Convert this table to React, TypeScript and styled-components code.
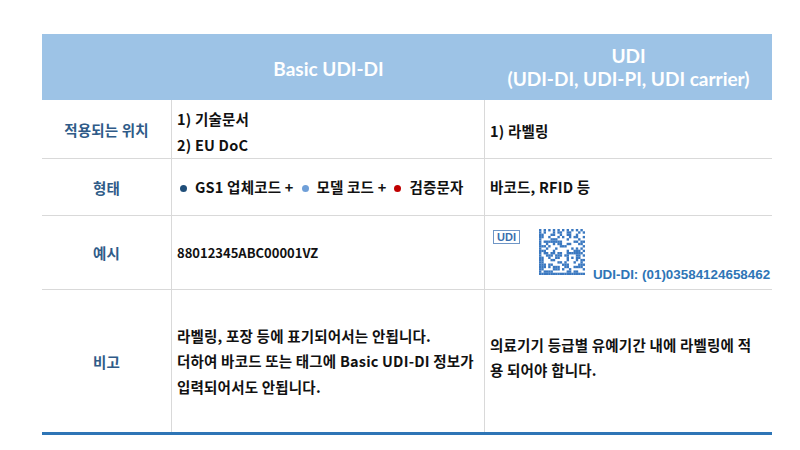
import React from "react";
import styled, { createGlobalStyle } from "styled-components";

const GlobalStyle = createGlobalStyle`
  html, body {
    margin: 0;
    padding: 0;
    background: #ffffff;
  }
  body {
    font-family: "Noto Sans CJK KR", "Noto Sans", sans-serif;
  }
`;

const Page = styled.div`
  width: 800px;
  height: 450px;
  padding: 34px 28px 0 42px;
  box-sizing: border-box;
`;

const Table = styled.div`
  display: grid;
  grid-template-columns: 130px 313px 287px;
  grid-template-rows: 66px 59px 57px 74px 142px;
  width: 730px;
  border-bottom: 3px solid #2e75b6;
`;

const HeadCell = styled.div<{ $drop?: number }>`
  background: #9dc3e6;
  color: #ffffff;
  font-family: Lato, "Noto Sans", sans-serif;
  font-size: 19px;
  font-weight: 700;
  display: flex;
  flex-direction: column;
  align-items: center;
  justify-content: center;
  text-align: center;
  padding-top: ${(p) => p.$drop ?? 0}px;
`;

const HeadLine = styled.div`
  height: 23px;
  line-height: 23px;
  white-space: nowrap;
`;

const LabelCell = styled.div<{ $last?: boolean }>`
  display: flex;
  align-items: center;
  justify-content: center;
  color: #2f5b88;
  font-size: 14.5px;
  font-weight: 700;
  letter-spacing: 0.2px;
  border-right: 1px solid #d9d9d9;
  border-bottom: ${(p) => (p.$last ? "none" : "1px solid #d9d9d9")};
`;

const Cell = styled.div<{ $last?: boolean; $right?: boolean; $lift?: number; $drop?: number }>`
  display: flex;
  flex-direction: column;
  justify-content: center;
  padding-left: 5px;
  padding-top: ${(p) => p.$drop ?? 0}px;
  padding-bottom: ${(p) => p.$lift ?? 0}px;
  color: #111111;
  font-size: 14.5px;
  font-weight: 700;
  line-height: 25.5px;
  letter-spacing: 0.2px;
  border-right: ${(p) => (p.$right ? "none" : "1px solid #d9d9d9")};
  border-bottom: ${(p) => (p.$last ? "none" : "1px solid #d9d9d9")};
`;

const Line = styled.div<{ $lh?: number }>`
  white-space: nowrap;
  line-height: ${(p) => (p.$lh ? `${p.$lh}px` : "inherit")};
`;

const Code = styled.div`
  white-space: nowrap;
  font-size: 13px;
  letter-spacing: 0;
`;

const Dot = styled.span<{ $color: string; $gap?: number }>`
  display: inline-block;
  width: 7px;
  height: 7px;
  border-radius: 50%;
  background: ${(p) => p.$color};
  margin: 0 8px 2px ${(p) => p.$gap ?? 3}px;
  vertical-align: middle;
`;

const ExampleBox = styled.div`
  display: flex;
  align-items: flex-start;
  padding-top: 2px;
  height: 56px;
`;

const UdiTag = styled.span`
  display: inline-block;
  border: 1px solid #6f96c6;
  color: #3a6fae;
  font-family: "Liberation Sans", Arial, sans-serif;
  font-size: 11px;
  font-weight: 700;
  line-height: 12px;
  letter-spacing: 0;
  padding: 0 3px;
  margin: 4px 0 0 3px;
`;

const Matrix = styled.svg`
  margin: 3px 0 0 19px;
  flex: none;
`;

const UdiCode = styled.span`
  align-self: flex-end;
  margin: 0 0 0 8px;
  color: #2e75b6;
  font-family: "Liberation Sans", Arial, sans-serif;
  font-size: 13.4px;
  font-weight: 700;
  line-height: 15px;
  letter-spacing: 0;
  white-space: nowrap;
`;

const DataMatrix: React.FC = () => {
  const n = 20;
  const s = 2.3;
  const cells: React.ReactNode[] = [];
  let seed = 7;
  const rnd = () => {
    seed = (seed * 9301 + 49297) % 233280;
    return seed / 233280;
  };
  for (let y = 0; y < n; y++) {
    for (let x = 0; x < n; x++) {
      let on: boolean;
      if (x === 0 || y === n - 1) on = true;
      else if (y === 0) on = x % 2 === 0;
      else if (x === n - 1) on = y % 2 === 1;
      else on = rnd() > 0.5;
      if (on)
        cells.push(
          <rect key={`${x}-${y}`} x={x * s} y={y * s} width={s + 0.1} height={s + 0.1} />
        );
    }
  }
  return (
    <Matrix width={n * s} height={n * s} viewBox={`0 0 ${n * s} ${n * s}`} fill="#3a78c0">
      {cells}
    </Matrix>
  );
};

export default function App() {
  return (
    <>
      <GlobalStyle />
      <Page>
        <Table>
          <HeadCell />
          <HeadCell $drop={2}>
            <HeadLine>Basic UDI-DI</HeadLine>
          </HeadCell>
          <HeadCell>
            <HeadLine>UDI</HeadLine>
            <HeadLine>(UDI-DI, UDI-PI, UDI carrier)</HeadLine>
          </HeadCell>

          <LabelCell>적용되는 위치</LabelCell>
          <Cell $drop={5}>
            <Line $lh={26}>1) 기술문서</Line>
            <Line $lh={26}>2) EU DoC</Line>
          </Cell>
          <Cell $right $drop={3}>
            <Line>1) 라벨링</Line>
          </Cell>

          <LabelCell>형태</LabelCell>
          <Cell>
            <Line>
              <Dot $color="#1f4e79" />GS1 업체코드 +
              <Dot $color="#6f9fd8" $gap={8} />모델 코드 +
              <Dot $color="#c00000" $gap={8} />검증문자
            </Line>
          </Cell>
          <Cell $right>
            <Line>바코드, RFID 등</Line>
          </Cell>

          <LabelCell>예시</LabelCell>
          <Cell>
            <Code>88012345ABC00001VZ</Code>
          </Cell>
          <Cell $right>
            <ExampleBox>
              <UdiTag>UDI</UdiTag>
              <DataMatrix />
              <UdiCode>UDI-DI: (01)03584124658462</UdiCode>
            </ExampleBox>
          </Cell>

          <LabelCell $last>비고</LabelCell>
          <Cell $last>
            <Line>라벨링, 포장 등에 표기되어서는 안됩니다.</Line>
            <Line>더하여 바코드 또는 태그에 Basic UDI-DI 정보가</Line>
            <Line>입력되어서도 안됩니다.</Line>
          </Cell>
          <Cell $last $right $lift={8}>
            <Line>의료기기 등급별 유예기간 내에 라벨링에 적</Line>
            <Line>용 되어야 합니다.</Line>
          </Cell>
        </Table>
      </Page>
    </>
  );
}
